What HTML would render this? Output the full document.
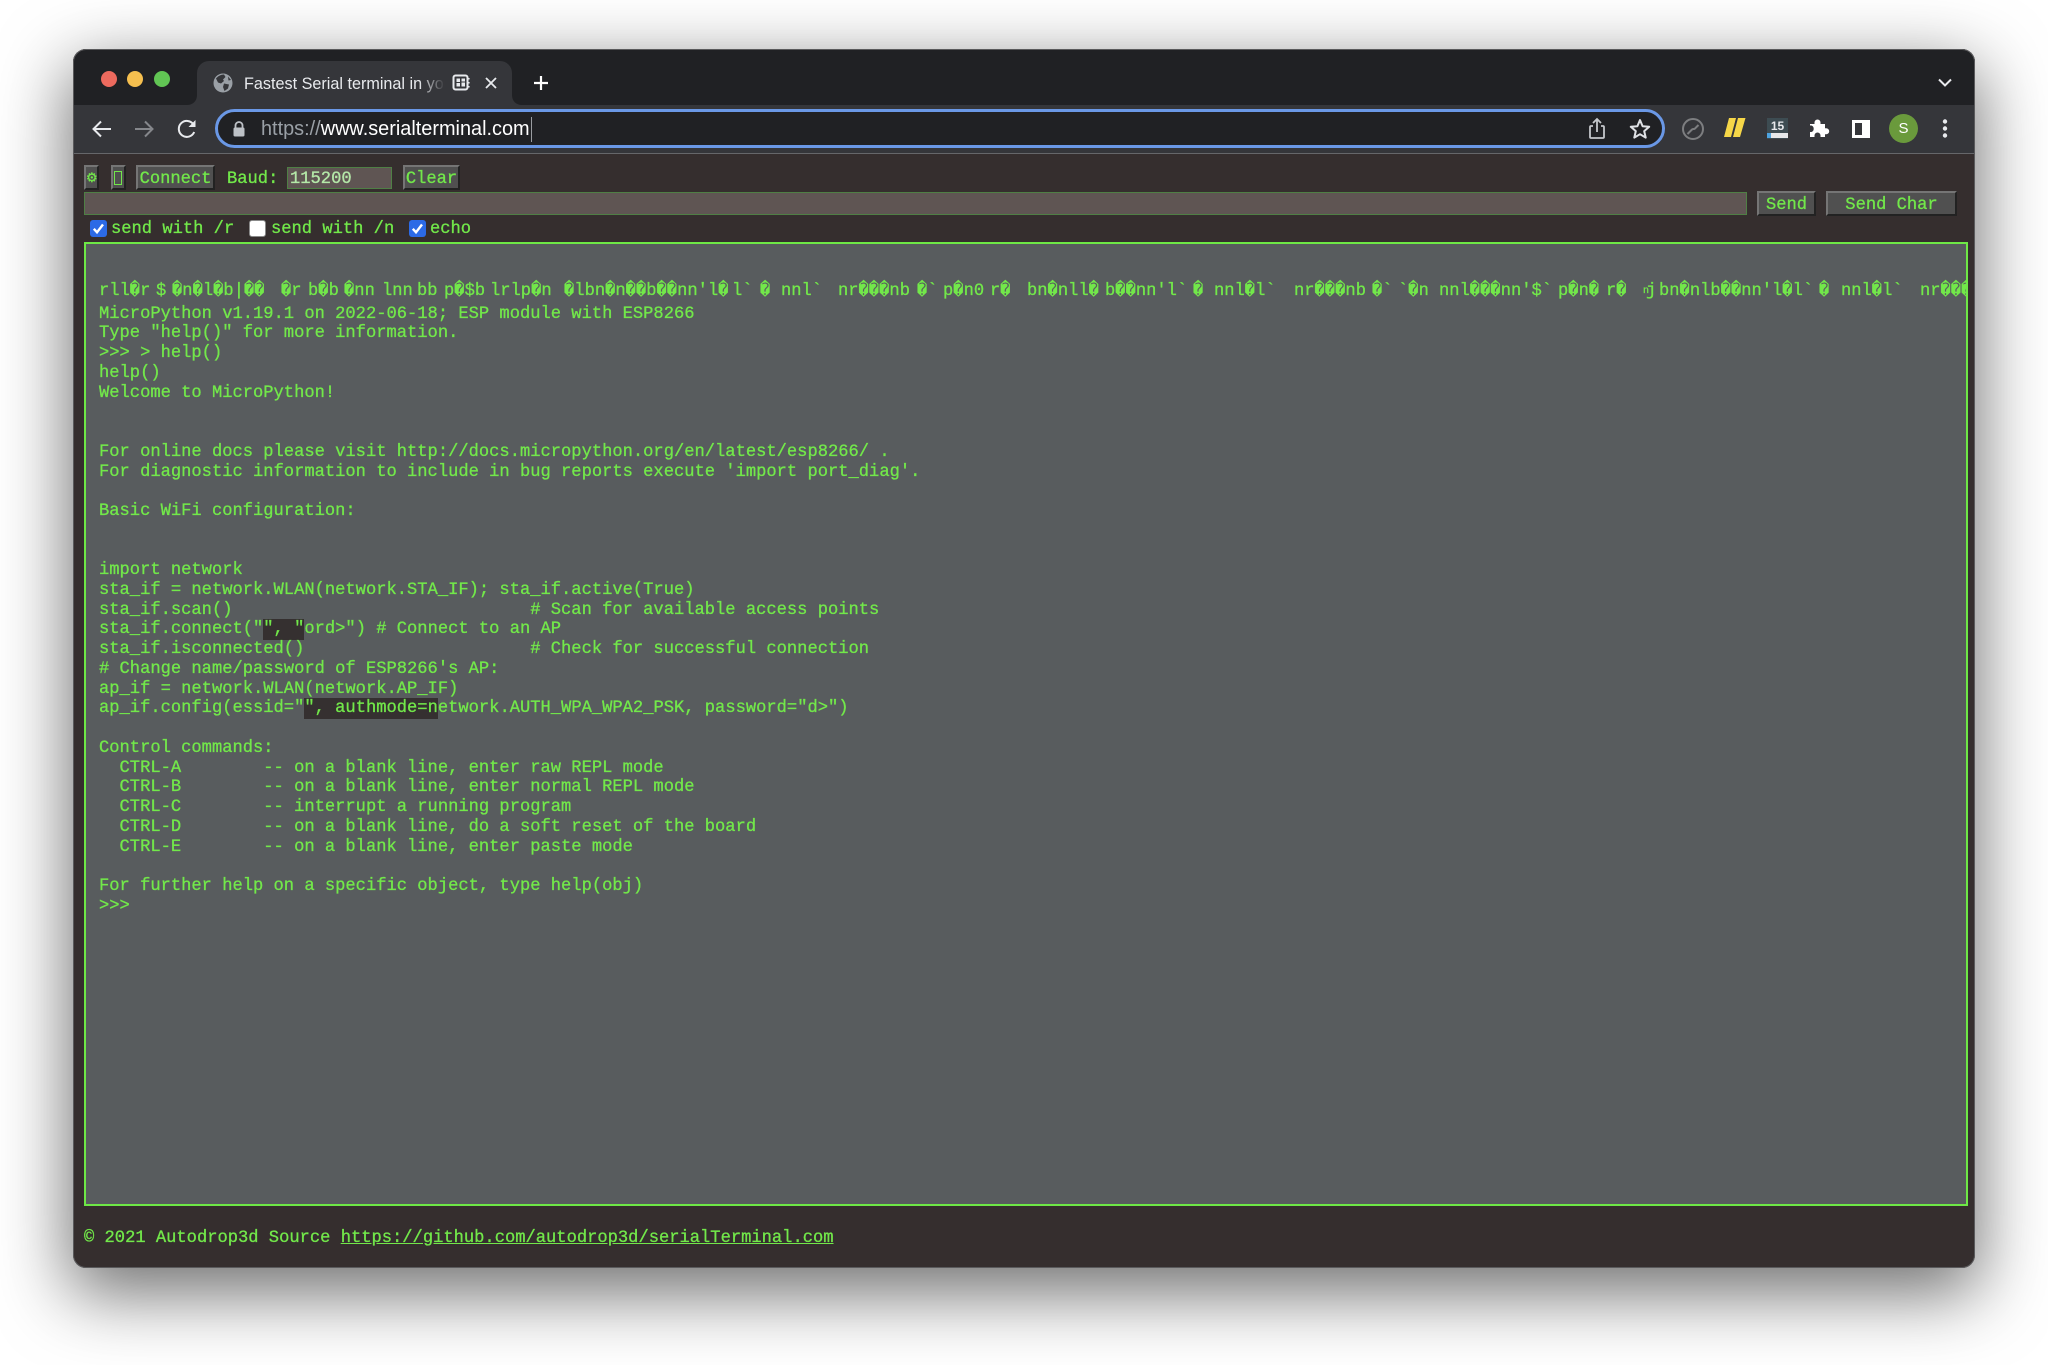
<!DOCTYPE html>
<html>
<head>
<meta charset="utf-8">
<title>Fastest Serial terminal</title>
<style>
html,body{margin:0;padding:0;background:#fff;width:2048px;height:1365px;overflow:hidden}
*{box-sizing:border-box}
.a{position:absolute}
#win{position:absolute;left:73px;top:49px;width:1902px;height:1219px;border-radius:13px;background:#352e2e;box-shadow:0 22px 70px 4px rgba(0,0,0,.56);filter:blur(.35px)}
#ring{left:0;top:0;width:1902px;height:1219px;border-radius:13px;border:1px solid #5a5a5c;z-index:9}
#tabs{left:0;top:0;width:1902px;height:56px;background:#202124;border-radius:13px 13px 0 0}
#bar{left:0;top:56px;width:1902px;height:49px;background:#35363a;border-bottom:1px solid #66676a}
.dot{position:absolute;width:16px;height:16px;border-radius:50%;top:22px}
#tab{left:124px;top:12px;width:315px;height:44px;background:#35363a;border-radius:12px 12px 0 0}
#ttl{position:absolute;left:171px;top:24px;width:201px;height:22px;overflow:hidden;white-space:nowrap;font:16.2px/22px "Liberation Sans",sans-serif;color:#e8eaed}
#fade{position:absolute;left:346px;top:24px;width:26px;height:22px;background:linear-gradient(90deg,rgba(53,54,58,0),#35363a)}
#omni{left:142px;top:60px;width:1450px;height:39px;background:#202124;border:3px solid #6a98e6;border-radius:20px}
#url{position:absolute;left:188px;top:68px;font:19.9px/25px "Liberation Sans",sans-serif;color:#fff;white-space:pre}
#url span{color:#9aa0a6}
#caret{left:458px;top:68px;width:1px;height:25px;background:#9a9da1}
.m,.btn,#inp,#term pre,#gl{-webkit-text-stroke:.3px}
.m{font-family:"Liberation Mono",monospace;font-size:17.12px;color:#72e84a;white-space:pre}
.btn{position:absolute;background:#505050;border-style:solid;border-width:2px;border-color:#757575 #222 #222 #757575;color:#72e84a;font:17.12px/21px "Liberation Mono",monospace;text-align:center;white-space:pre;padding-top:2px}
#inp{left:214px;top:118px;width:105px;height:22px;background:#5f5553;border:1px solid #4f7f45;color:#b4e8a8;font:17.12px/22px "Liberation Mono",monospace;padding:1px 0 0 2px}
#line{left:11px;top:143px;width:1663px;height:23px;background:#5f5553;border:1px solid #4f7f45}
.cb{position:absolute;top:171px;width:17px;height:17px;border-radius:3px;background:#2c6ae6}
.cb svg{position:absolute;left:0;top:0}
#term{left:11px;top:193px;width:1884px;height:964px;background:#585c5e;border:2px solid #6ee846;overflow:hidden}
#term pre{position:absolute;left:13px;top:60.7px;margin:0;font:17.12px/19.73px "Liberation Mono",monospace;color:#72e84a}
#gl{position:absolute;left:0;top:37px;width:1880px;height:22px}
#gl span{position:absolute;top:0;font:17.12px/22px "Liberation Mono","DejaVu Sans Mono",monospace;color:#72e84a;white-space:pre}
.h{background:#353030;padding:1px 0}
a{color:#72e84a}
</style>
</head>
<body>
<div id="win">
  <div class="a" id="tabs"></div>
  <div class="a" id="bar"></div>
  <div class="dot" style="left:28px;background:#ed6a5e"></div>
  <div class="dot" style="left:54px;background:#f5bf4f"></div>
  <div class="dot" style="left:81px;background:#61c554"></div>

  <div class="a" id="tab"></div>
  <svg class="a" style="left:114px;top:46px" width="10" height="10"><path d="M10 0V10H0C6 10 10 6 10 0Z" fill="#35363a"/></svg>
  <svg class="a" style="left:439px;top:46px" width="10" height="10"><path d="M0 0V10H10C4 10 0 6 0 0Z" fill="#35363a"/></svg>
  <svg class="a" style="left:140px;top:24px" width="20" height="20" viewBox="0 0 20 20"><circle cx="10" cy="10" r="9.5" fill="#9aa0a6"/><path d="M3 5.5C5 3 8 1.5 11 1.5L12.5 4 10 6.5 11 8 8 10.5 5 9.5ZM11 10.5 16 11.5 15 15.5 11.5 18 10 14ZM15 3.5 18 7 15.5 7.5Z" fill="#35363a"/></svg>
  <div id="ttl">Fastest Serial terminal in your browser</div>
  <div id="fade"></div>
  <svg class="a" style="left:378px;top:23px" width="20" height="22" viewBox="0 0 20 22"><rect x="2.5" y="3.5" width="14" height="14" rx="2" fill="none" stroke="#e8eaed" stroke-width="2"/><rect x="5.5" y="6.5" width="3.5" height="3.5" fill="#e8eaed"/><rect x="10.5" y="6.5" width="3.5" height="3" fill="#e8eaed"/><rect x="5.5" y="11" width="3.5" height="3.5" fill="#e8eaed"/><rect x="10.5" y="10.5" width="3.5" height="4" fill="#e8eaed"/><path d="M18 6v1.5M18 10v1.5M18 14v1.5" stroke="#e8eaed" stroke-width="1.2"/></svg>
  <svg class="a" style="left:410px;top:26px" width="16" height="16" viewBox="0 0 16 16"><path d="M3 3 13 13M13 3 3 13" stroke="#e8eaed" stroke-width="1.8"/></svg>
  <svg class="a" style="left:459px;top:25px" width="18" height="18" viewBox="0 0 18 18"><path d="M9 2V16M2 9H16" stroke="#fff" stroke-width="2.2"/></svg>
  <svg class="a" style="left:1862px;top:27px" width="20" height="14" viewBox="0 0 20 14"><path d="M4 3.5 10 9.5 16 3.5" fill="none" stroke="#e8eaed" stroke-width="2"/></svg>

  <!-- nav -->
  <svg class="a" style="left:17px;top:68px" width="24" height="24" viewBox="0 0 24 24"><path d="M21 12H4M11 4.5 3.5 12 11 19.5" fill="none" stroke="#e8eaed" stroke-width="2"/></svg>
  <svg class="a" style="left:59px;top:68px" width="24" height="24" viewBox="0 0 24 24"><path d="M3 12H20M13 4.5 20.5 12 13 19.5" fill="none" stroke="#85878b" stroke-width="2"/></svg>
  <svg class="a" style="left:102px;top:68px" width="24" height="24" viewBox="0 0 24 24"><path d="M19.2 15A8 8 0 1 1 18.5 7.5" fill="none" stroke="#e8eaed" stroke-width="2"/><path d="M20.5 3V10H13.5Z" fill="#e8eaed"/></svg>

  <div class="a" id="omni"></div>
  <svg class="a" style="left:158px;top:71px" width="16" height="18" viewBox="0 0 16 18"><path d="M4.5 8V5.5a3.5 3.5 0 0 1 7 0V8" fill="none" stroke="#bdc1c6" stroke-width="1.8"/><rect x="2.5" y="7.5" width="11" height="9" rx="1.5" fill="#bdc1c6"/></svg>
  <div id="url"><span>https://</span>www.serialterminal.com</div>
  <div class="a" id="caret"></div>
  <svg class="a" style="left:1513px;top:68px" width="22" height="24" viewBox="0 0 22 24"><path d="M7 9H5a1 1 0 0 0-1 1v10a1 1 0 0 0 1 1h12a1 1 0 0 0 1-1V10a1 1 0 0 0-1-1h-2M11 15V2.5M7 6 11 2 15 6" fill="none" stroke="#c4c7cb" stroke-width="1.8"/></svg>
  <svg class="a" style="left:1555px;top:68px" width="24" height="24" viewBox="0 0 24 24"><path d="M12 3 14.6 9.2 21.2 9.8 16.2 14.1 17.7 20.6 12 17.2 6.3 20.6 7.8 14.1 2.8 9.8 9.4 9.2Z" fill="none" stroke="#dfe1e5" stroke-width="2" stroke-linejoin="round"/></svg>

  <!-- extensions -->
  <svg class="a" style="left:1608px;top:68px" width="24" height="24" viewBox="0 0 24 24"><circle cx="12" cy="12" r="10" fill="none" stroke="#7d7e80" stroke-width="2"/><path d="M6.5 17 11 12.5C12 11.5 13 12.500 13.800 11.700L17.500 8" fill="none" stroke="#7d7e80" stroke-width="2"/></svg>
  <svg class="a" style="left:1650px;top:68px" width="24" height="22" viewBox="0 0 24 22"><path d="M6 1H13L8 20H1ZM15 1H22.500L17 20H10Z" fill="#f6d748"/></svg>
  <div class="a" style="left:1694px;top:69px;width:21px;height:21px;background:#3d4c52"></div>
  <div class="a" style="left:1694px;top:69px;width:21px;height:16px;font:bold 12px/16px 'Liberation Sans',sans-serif;color:#e8eaed;text-align:center">15</div>
  <div class="a" style="left:1694px;top:84px;width:21px;height:5px;background:#e6e8ea"></div>
  <div class="a" style="left:1694px;top:84px;width:4px;height:5px;background:#4da3e0"></div>
  <svg class="a" style="left:1735px;top:68px" width="22" height="22" viewBox="0 0 22 22"><path d="M2 8H6.500V6.500A3 3 0 0 1 12.500 6.500V8H17V12.200H18.200A3 3 0 0 1 18.200 18.200H17V21H12.500V19.500A3 3 0 0 0 6.500 19.500V21H2V16H3.500A3.500 3.500 0 0 0 3.500 9.500H2Z" fill="#fff" transform="translate(0 -1)"/></svg>
  <div class="a" style="left:1779px;top:71px;width:18px;height:18px;background:#fff"></div>
  <div class="a" style="left:1782px;top:74px;width:7px;height:12px;background:#35363a"></div>
  <div class="a" style="left:1816px;top:65px;width:29px;height:29px;border-radius:50%;background:#6a9a3c;color:#fff;font:15px/29px 'Liberation Sans',sans-serif;text-align:center">S</div>
  <svg class="a" style="left:1866px;top:69px" width="12" height="22" viewBox="0 0 12 22"><circle cx="6" cy="3.500" r="2.200" fill="#e8eaed"/><circle cx="6" cy="10.500" r="2.200" fill="#e8eaed"/><circle cx="6" cy="17.500" r="2.200" fill="#e8eaed"/></svg>

  <!-- controls -->
  <div class="btn" style="left:11px;top:116px;width:15px;height:25px;font-size:13px;line-height:21px;font-family:'DejaVu Sans',sans-serif;padding:1px 0 0">⚙</div>
  <div class="btn" style="left:38px;top:116px;width:15px;height:25px"></div>
  <div class="a" style="left:41px;top:122px;width:8px;height:14px;border:1.500px solid #72e84a"></div>
  <div class="btn" style="left:63px;top:116px;width:79px;height:25px">Connect</div>
  <div class="a m" style="left:154px;top:120px;line-height:21px">Baud:</div>
  <div class="a" id="inp">115200</div>
  <div class="btn" style="left:330px;top:116px;width:57px;height:25px">Clear</div>
  <div class="a" id="line"></div>
  <div class="btn" style="left:1684px;top:142px;width:59px;height:25px">Send</div>
  <div class="btn" style="left:1753px;top:142px;width:131px;height:25px">Send Char</div>

  <div class="cb" style="left:17px"><svg width="17" height="17" viewBox="0 0 17 17"><path d="M3.800 8.800 7 12.300 13 4.500" fill="none" stroke="#fff" stroke-width="2.400"/></svg></div>
  <div class="a m" style="left:38px;top:171px;line-height:20px">send with /r</div>
  <div class="cb" style="left:176px;background:#fff;border:1px solid #8a8a8a"></div>
  <div class="a m" style="left:198px;top:171px;line-height:20px">send with /n</div>
  <div class="cb" style="left:336px"><svg width="17" height="17" viewBox="0 0 17 17"><path d="M3.800 8.800 7 12.300 13 4.500" fill="none" stroke="#fff" stroke-width="2.400"/></svg></div>
  <div class="a m" style="left:357px;top:171px;line-height:20px">echo</div>

  <div class="a" id="term">
<div id="gl"><span style="left:13px">rll�r</span><span style="left:70px">$</span><span style="left:86px">�n�l�b|��</span><span style="left:195px">�r</span><span style="left:222px">b�b</span><span style="left:258px">�nn</span><span style="left:296px">lnn</span><span style="left:331px">bb</span><span style="left:358px">p�$b</span><span style="left:404px">lrlp�n</span><span style="left:478px">�lbn�n��b��nn'l�</span><span style="left:646px">l`</span><span style="left:674px">�</span><span style="left:695px">nnl`</span><span style="left:752px">nr���nb</span><span style="left:831px">�`</span><span style="left:857px">p�n0</span><span style="left:904px">r�</span><span style="left:941px">bn�nll�</span><span style="left:1019px">b��nn'l`</span><span style="left:1107px">�</span><span style="left:1128px">nnl�l`</span><span style="left:1208px">nr���nb</span><span style="left:1286px">�`</span><span style="left:1312px">`�n</span><span style="left:1353px">nnl���nn'$`</span><span style="left:1472px">p�n�</span><span style="left:1520px">r�</span><span style="left:1557px;font-size:10px">n</span><span style="left:1560px">j</span><span style="left:1573px">bn�nlb��nn'l�l`</span><span style="left:1733px">�</span><span style="left:1755px">nnl�l`</span><span style="left:1834px">nr���nb</span></div>
<pre>MicroPython v1.19.1 on 2022-06-18; ESP module with ESP8266
Type "help()" for more information.
&gt;&gt;&gt; &gt; help()
help()
Welcome to MicroPython!


For online docs please visit http://docs.micropython.org/en/latest/esp8266/ .
For diagnostic information to include in bug reports execute 'import port_diag'.

Basic WiFi configuration:


import network
sta_if = network.WLAN(network.STA_IF); sta_if.active(True)
sta_if.scan()                             # Scan for available access points
sta_if.connect("<span class="h">", "</span>ord&gt;") # Connect to an AP
sta_if.isconnected()                      # Check for successful connection
# Change name/password of ESP8266's AP:
ap_if = network.WLAN(network.AP_IF)
ap_if.config(essid="<span class="h">", authmode=n</span>etwork.AUTH_WPA_WPA2_PSK, password="d&gt;")

Control commands:
  CTRL-A        -- on a blank line, enter raw REPL mode
  CTRL-B        -- on a blank line, enter normal REPL mode
  CTRL-C        -- interrupt a running program
  CTRL-D        -- on a blank line, do a soft reset of the board
  CTRL-E        -- on a blank line, enter paste mode

For further help on a specific object, type help(obj)
&gt;&gt;&gt; </pre>
  </div>
  <div class="a m" style="left:11px;top:1180px;line-height:20px">© 2021 Autodrop3d Source <a href="#">https://github.com/autodrop3d/serialTerminal.com</a></div>
  <div class="a" id="ring"></div>
</div>
</body>
</html>
